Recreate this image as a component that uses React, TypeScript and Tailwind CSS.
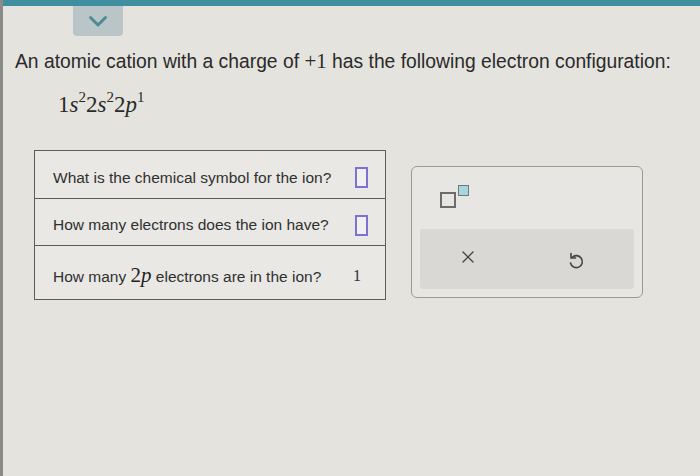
import { X } from 'lucide-react'

const rows = [
  { id: 'symbol', h: 'h-[47px]', label: <>What is the chemical symbol for the ion?</>, answer: 'box' },
  { id: 'electrons', h: 'h-[47px]', label: <>How many electrons does the ion have?</>, answer: 'box' },
  {
    id: 'twop',
    h: 'h-[54px]',
    label: (
      <>
        How many{' '}
        <span className="font-['Liberation_Serif',serif] text-[21px] text-[#222]">
          2<i>p</i>
        </span>{' '}
        electrons are in the ion?
      </>
    ),
    answer: '1',
  },
]

function AnswerBox() {
  return <span className="inline-block w-[13px] h-[21px] border-2 border-[#7b72d6] bg-[#f1f0ee]" />
}

export default function App() {
  return (
    <div className="w-[700px] h-[476px] overflow-hidden bg-[#e5e3de] font-['Liberation_Sans',Arial,sans-serif] text-[#2b2b2b] border-l-[3px] border-[#8a8a86]">
      <div className="h-[6px] bg-[#3f8fa0]" />
      <div className="pl-[70px]">
        <div className="w-[50px] h-[30px] bg-[#b9c5c6] rounded-b-[4px] flex items-center justify-center">
          <svg width="20" height="13" viewBox="0 0 20 13" fill="none">
            <path d="M2.5 2.5l7.5 7.5 7.5-7.5" stroke="#4d8c97" strokeWidth="3" strokeLinecap="round" strokeLinejoin="round" />
          </svg>
        </div>
      </div>

      <p className="mt-[13px] pl-[12px] text-[19.3px] leading-[24px] text-[#2a2a2a]">
        An atomic cation with a charge of{' '}
        <span className="font-['Liberation_Serif',serif] text-[21px]">+1</span> has the following electron
        configuration:
      </p>

      <div className="mt-[16px] pl-[55px] font-['Liberation_Serif',serif] text-[23px] leading-[30px] text-[#2a2a2a]">
        1<i>s</i>
        <sup className="text-[15px] -top-[0.7em]">2</sup>2<i>s</i>
        <sup className="text-[15px] -top-[0.7em]">2</sup>2<i>p</i>
        <sup className="text-[15px] -top-[0.7em]">1</sup>
      </div>

      <div className="mt-[30px] pl-[31px] flex items-start gap-[25px]">
        <div className="w-[352px] border border-[#5c5c5a] bg-[#e9e8e4]">
          {rows.map((r, i) => (
            <div
              key={r.id}
              className={`${r.h} flex items-center justify-between pl-[18px] pr-[17px] pt-[6px] text-[15.5px] text-[#303030] ${
                i > 0 ? 'border-t border-[#5c5c5a]' : ''
              }`}
            >
              <span>{r.label}</span>
              {r.answer === 'box' ? (
                <AnswerBox />
              ) : (
                <span className="font-['Liberation_Serif',serif] text-[16px] pr-[7px]">{r.answer}</span>
              )}
            </div>
          ))}
        </div>

        <div className="mt-[16px] w-[232px] h-[132px] rounded-[6px] border border-[#9a9a96] bg-[#e8e6e2] px-[8px] pt-[18px] pb-[8px] flex flex-col">
          <div className="pl-[20px] flex items-start">
            <span className="mt-[7px] w-[16px] h-[16px] border-2 border-[#6d6d6a]" />
            <span className="ml-[2px] w-[11px] h-[11px] border-[1.5px] border-[#6d7a7c] bg-[#a9d6de]" />
          </div>
          <div className="mt-auto h-[60px] rounded-[3px] bg-[#d9d8d4] flex items-center pl-[38px]">
            <X size={20} strokeWidth={1.6} className="text-[#444] mt-[-4px]" />
            <svg width="18" height="20" viewBox="0 0 18 20" fill="none" className="ml-[89px] mt-[4px]">
              <path
                d="M5 6.5A6 6 0 1 1 3.5 12"
                stroke="#444"
                strokeWidth="1.6"
                strokeLinecap="round"
              />
              <path d="M4 2.5v4.5h4.5" stroke="#444" strokeWidth="1.6" strokeLinecap="round" strokeLinejoin="round" />
            </svg>
          </div>
        </div>
      </div>
    </div>
  )
}
